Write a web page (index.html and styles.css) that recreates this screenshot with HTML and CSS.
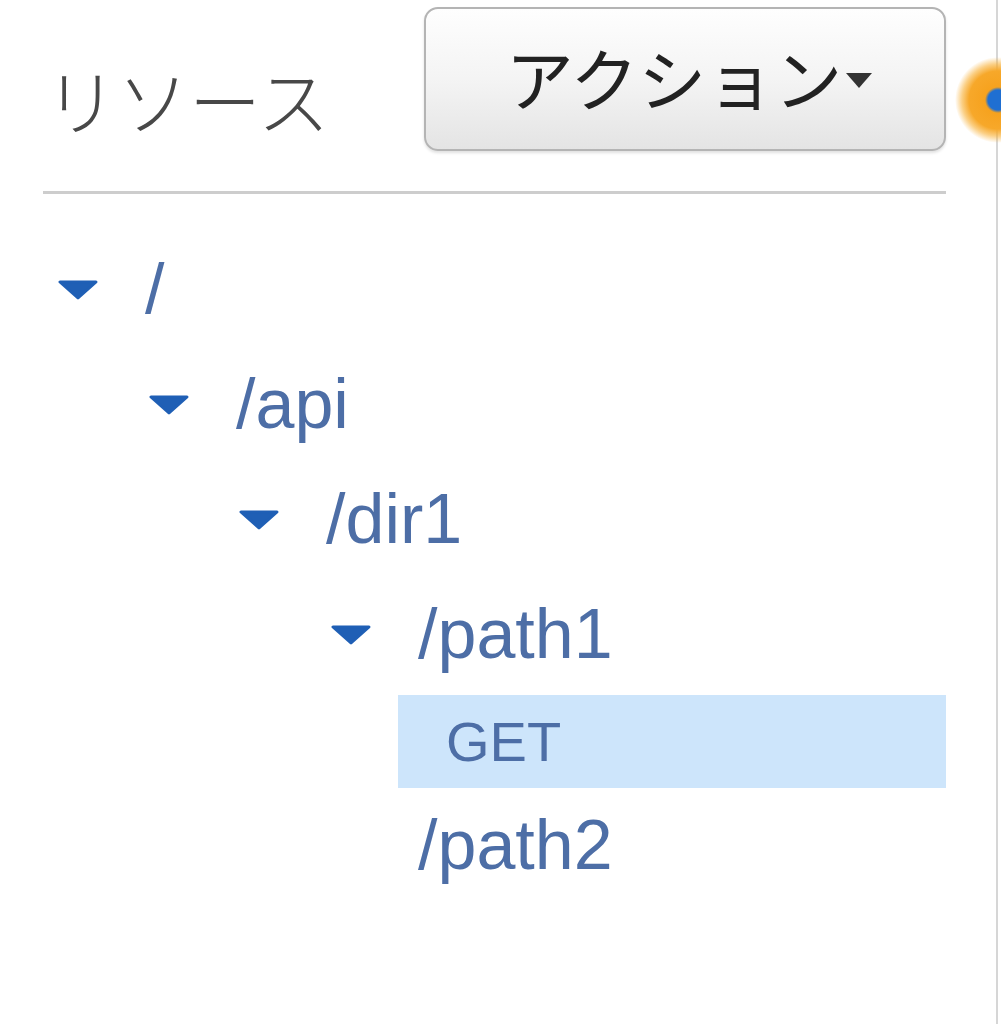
FILE: index.html
```html
<!DOCTYPE html>
<html lang="ja">
<head>
<meta charset="utf-8">
<title>リソース</title>
<link rel="stylesheet" href="styles.css">
</head>
<body>
<div class="page">
  <aside class="sidebar">
    <div class="panel">
      <header class="header">
        <h1 class="title">リソース</h1>
        <button class="action-btn" type="button">アクション<span class="caret"></span></button>
      </header>
      <ul class="tree">
        <li class="row lvl0"><svg class="tri" viewBox="0 0 40 20"><polygon points="2,2 38,2 20,18"/></svg><span class="label">/</span></li>
        <li class="row lvl1"><svg class="tri" viewBox="0 0 40 20"><polygon points="2,2 38,2 20,18"/></svg><span class="label">/api</span></li>
        <li class="row lvl2"><svg class="tri" viewBox="0 0 40 20"><polygon points="2,2 38,2 20,18"/></svg><span class="label">/dir1</span></li>
        <li class="row lvl3"><svg class="tri" viewBox="0 0 40 20"><polygon points="2,2 38,2 20,18"/></svg><span class="label">/path1</span></li>
        <li class="method selected"><span class="label">GET</span></li>
        <li class="row leaf"><span class="label">/path2</span></li>
      </ul>
    </div>
  </aside>
  <div class="focus-dot"></div>
</div>
</body>
</html>
```
FILE: styles.css
```css
html, body {
  margin: 0;
  padding: 0;
  background: #ffffff;
  overflow: hidden;
}

.page {
  display: flex;
  height: 1024px;
  width: 1001px;
}

.sidebar {
  width: 998px;
  box-sizing: border-box;
  padding-left: 43px;
  border-right: 2px solid #d6d6d6;
  flex: none;
}

.panel {
  width: 903px;
}

.header {
  display: flex;
  justify-content: space-between;
  align-items: flex-start;
  height: 191px;
  border-bottom: 3px solid #cdcdcd;
}

.title {
  margin: 62px 0 0 2px;
  font-family: "Noto Sans CJK JP", sans-serif;
  font-weight: 300;
  font-size: 72px;
  line-height: 72px;
  color: #484848;
  letter-spacing: 0;
}

.action-btn {
  margin-top: 7px;
  width: 522px;
  height: 144px;
  box-sizing: border-box;
  border: 2px solid #b4b4b4;
  border-radius: 14px;
  background: linear-gradient(#fefefe 0%, #f4f4f4 50%, #e4e4e4 100%);
  box-shadow: 0 2px 3px rgba(0,0,0,0.12);
  display: flex;
  align-items: center;
  justify-content: center;
  font-family: "Noto Sans CJK JP", sans-serif;
  font-weight: 400;
  font-size: 68px;
  color: #222222;
  padding: 0 0 6px 8px;
  letter-spacing: 0;
}

.caret {
  display: inline-block;
  width: 0;
  height: 0;
  margin-left: 4px;
  margin-top: 8px;
  border-left: 13px solid transparent;
  border-right: 13px solid transparent;
  border-top: 15px solid #333333;
}

.tree {
  list-style: none;
  margin: 0;
  padding: 38px 0 0 0;
  font-family: "Liberation Sans", Arial, sans-serif;
  color: #4d6ea6;
}

.row {
  display: flex;
  align-items: center;
  gap: 47px;
  height: 115px;
  font-size: 70px;
  line-height: 115px;
}

.lvl0 { padding-left: 15px; }
.lvl1 { padding-left: 106px; }
.lvl2 { padding-left: 196px; }
.lvl3 { padding-left: 288px; }
.leaf { padding-left: 375px; }

.tri {
  width: 40px;
  height: 20px;
  flex: none;
}

.tri polygon {
  fill: #1f5fb5;
  stroke: #1f5fb5;
  stroke-width: 3;
  stroke-linejoin: round;
}

.method {
  margin: 3px 0 0 355px;
  height: 93px;
  line-height: 93px;
  padding-left: 48px;
  font-size: 56px;
}

.selected {
  background: #cde5fb;
}

.focus-dot {
  position: absolute;
  left: 955px;
  top: 57px;
  width: 86px;
  height: 86px;
  border-radius: 50%;
  background: radial-gradient(circle, #1f6fd2 0, #1f6fd2 10px, #f6a21e 13px, #f7a82a 29px, rgba(248,175,50,0.6) 36px, rgba(255,255,255,0) 43px);
}
```
